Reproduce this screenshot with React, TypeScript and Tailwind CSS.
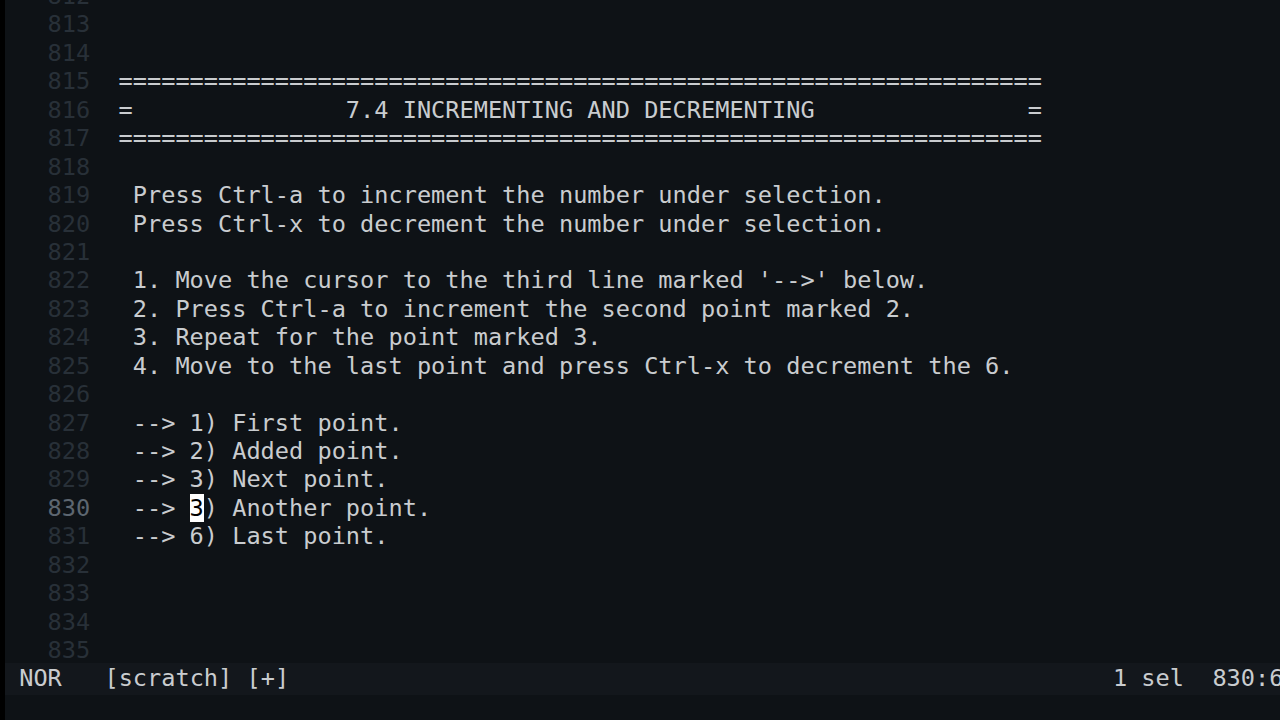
import React from "react";

const lines: { n: number; t: string }[] = [
  { n: 812, t: "" },
  { n: 813, t: "" },
  { n: 814, t: "" },
  { n: 815, t: "=================================================================" },
  { n: 816, t: "=" + " ".repeat(15) + "7.4 INCREMENTING AND DECREMENTING" + " ".repeat(15) + "=" },
  { n: 817, t: "=================================================================" },
  { n: 818, t: "" },
  { n: 819, t: " Press Ctrl-a to increment the number under selection." },
  { n: 820, t: " Press Ctrl-x to decrement the number under selection." },
  { n: 821, t: "" },
  { n: 822, t: " 1. Move the cursor to the third line marked '-->' below." },
  { n: 823, t: " 2. Press Ctrl-a to increment the second point marked 2." },
  { n: 824, t: " 3. Repeat for the point marked 3." },
  { n: 825, t: " 4. Move to the last point and press Ctrl-x to decrement the 6." },
  { n: 826, t: "" },
  { n: 827, t: " --> 1) First point." },
  { n: 828, t: " --> 2) Added point." },
  { n: 829, t: " --> 3) Next point." },
  { n: 830, t: "" },
  { n: 831, t: " --> 6) Last point." },
  { n: 832, t: "" },
  { n: 833, t: "" },
  { n: 834, t: "" },
  { n: 835, t: "" },
];

const left = " NOR   [scratch] [+]";
const status = left + " ".repeat(78 - left.length) + "1 sel  830:6";

export default function App() {
  const font = { fontFamily: '"DejaVu Sans Mono", monospace' };
  return (
    <div className="w-[1280px] h-[720px] overflow-hidden bg-black flex">
      <div className="w-[5px] shrink-0 bg-black" />
      <div
        className="flex-1 bg-[#0e1216] text-[23.6px] leading-[28.45px] text-[#c9cccf] overflow-hidden"
        style={font}
      >
        <div className="-mt-[18px]">
          {lines.map((l) => (
            <div key={l.n} className="flex h-[28.45px] whitespace-pre">
              <span
                className={
                  "w-[85.2px] text-right shrink-0 " +
                  (l.n === 830 ? "text-[#5d6670]" : "text-[#283038]")
                }
              >
                {l.n}
              </span>
              <span className="w-[28.4px] shrink-0" />
              {l.n === 830 ? (
                <span>
                  {" --> "}
                  <span className="bg-white text-black">3</span>
                  {") Another point."}
                </span>
              ) : (
                <span>{l.t}</span>
              )}
            </div>
          ))}
          <div className="h-[32px] -mt-[2px] pt-[0px] bg-[#13171c] whitespace-pre overflow-hidden text-[#c9cccf] leading-[30px]">
            {status}
          </div>
          <div className="h-[28.45px]" />
        </div>
      </div>
    </div>
  );
}
